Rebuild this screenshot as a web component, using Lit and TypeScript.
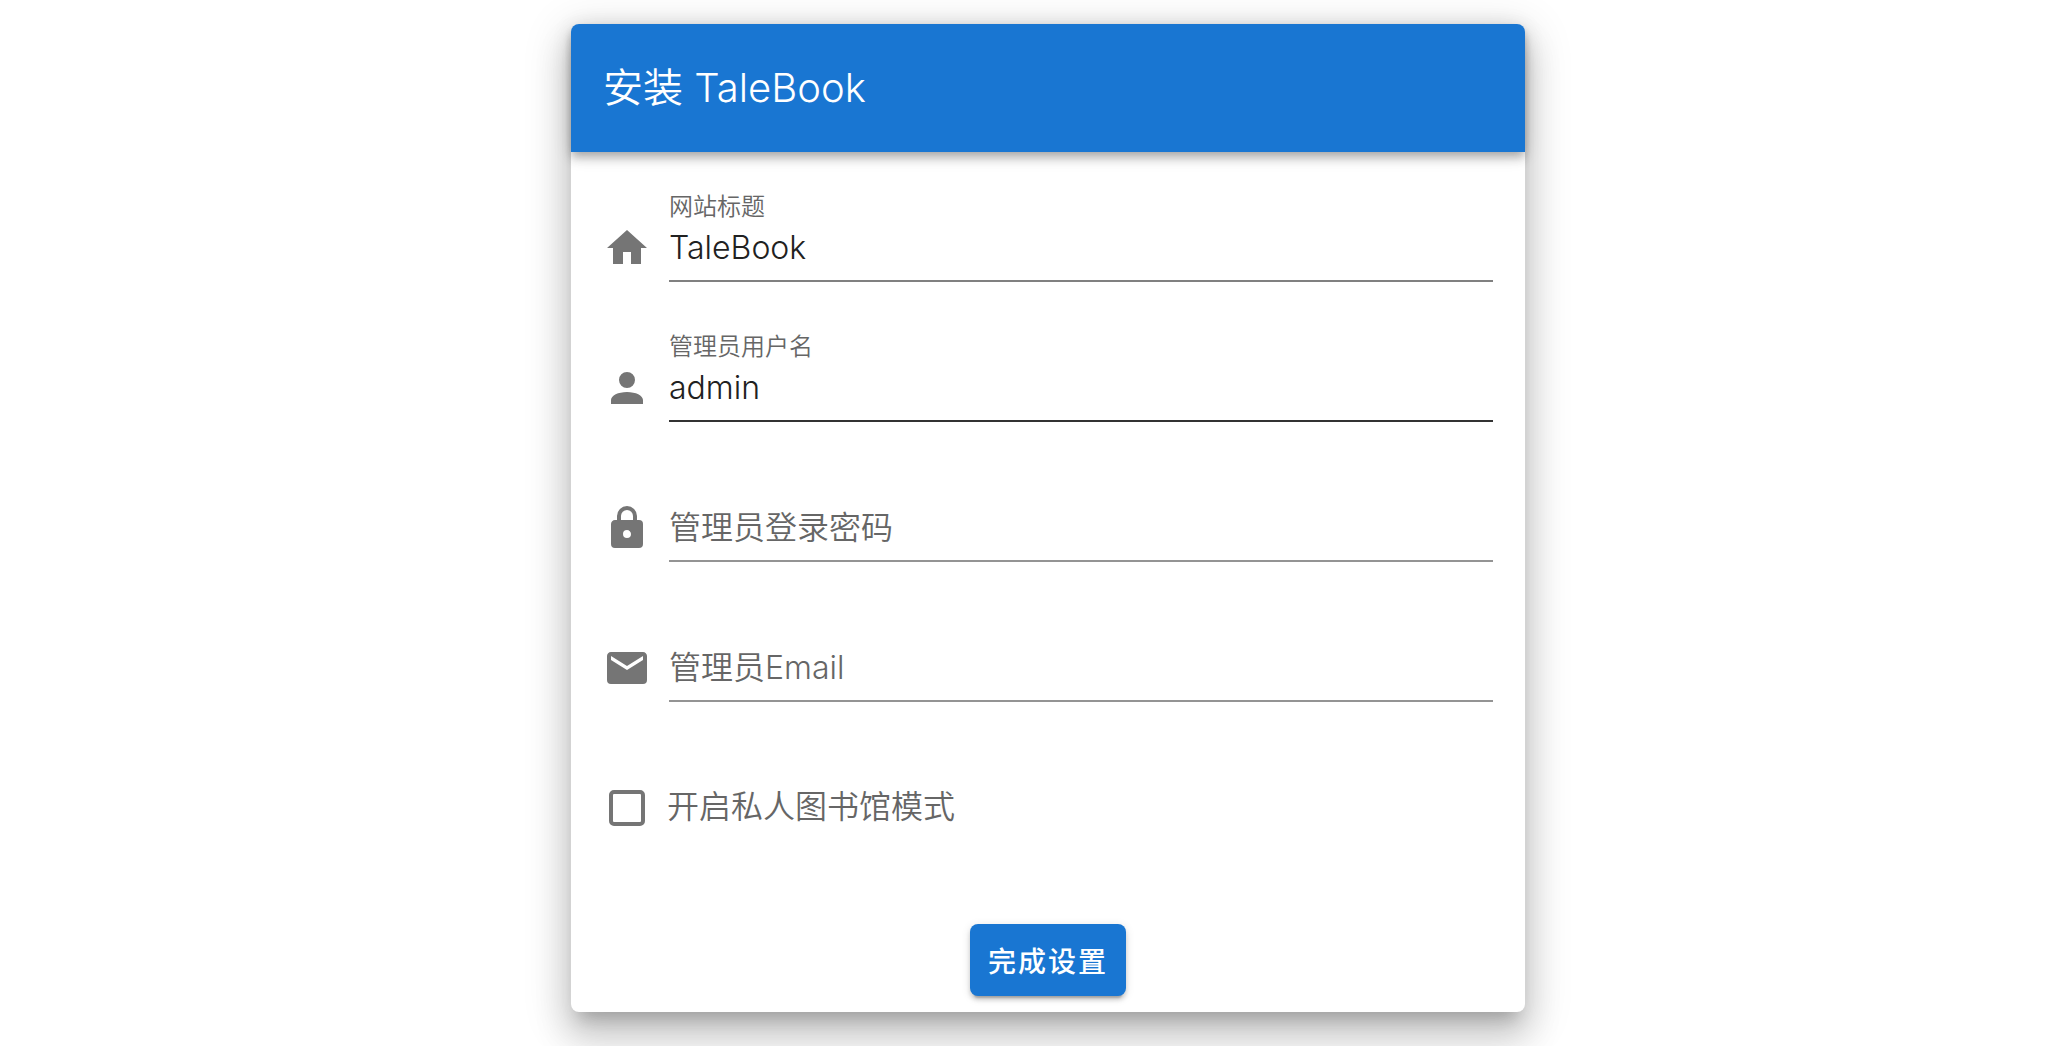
import { LitElement, html, css } from "lit";
import { customElement, property, state } from "lit/decorators.js";
import { classMap } from "lit/directives/class-map.js";

const ICONS = {
  home: "M10,20V14H14V20H19V12H22L12,3L2,12H5V20H10Z",
  account:
    "M12,4A4,4 0 0,1 16,8A4,4 0 0,1 12,12A4,4 0 0,1 8,8A4,4 0 0,1 12,4M12,14C16.42,14 20,15.79 20,18V20H4V18C4,15.79 7.58,14 12,14Z",
  lock: "M12,17A2,2 0 0,0 14,15C14,13.89 13.1,13 12,13A2,2 0 0,0 10,15A2,2 0 0,0 12,17M18,8A2,2 0 0,1 20,10V20A2,2 0 0,1 18,22H6A2,2 0 0,1 4,20V10C4,8.89 4.9,8 6,8H7V6A5,5 0 0,1 12,1A5,5 0 0,1 17,6V8H18M12,3A3,3 0 0,0 9,6V8H15V6A3,3 0 0,0 12,3Z",
  email:
    "M20,8L12,13L4,8V6L12,11L20,6M20,4H4C2.89,4 2,4.89 2,6V18A2,2 0 0,0 4,20H20A2,2 0 0,0 22,18V6C22,4.89 21.1,4 20,4Z",
};

type IconName = keyof typeof ICONS;

@customElement("text-field")
export class TextField extends LitElement {
  @property() label = "";
  @property() icon: IconName = "home";
  @property() type = "text";
  @property() value = "";
  @property({ type: Boolean }) active = false;
  @state() private focused = false;

  static styles = css`
    :host {
      display: block;
    }
    .field {
      display: grid;
      grid-template-columns: 48px minmax(0, 1fr);
      grid-template-rows: 32px 66px;
      column-gap: 18px;
      margin-bottom: 42px;
    }
    .icon {
      grid-area: 2 / 1;
      width: 48px;
      height: 48px;
      margin-top: 8px;
      fill: #757575;
    }
    .label {
      grid-area: 2 / 2;
      align-self: center;
      z-index: 1;
      padding-bottom: 2px;
      font-size: 32px;
      line-height: 40px;
      color: #666;
      pointer-events: none;
      white-space: nowrap;
    }
    .label.floating {
      grid-area: 1 / 2;
      align-self: end;
      padding: 0;
      font-size: 24px;
      line-height: 18px;
    }
    .input {
      grid-area: 2 / 2;
      width: 100%;
      box-sizing: border-box;
      margin: 0;
      padding: 0 0 2px;
      border: 0;
      border-bottom: 2px solid #949494;
      border-radius: 0;
      outline: none;
      background: transparent;
      color: #212121;
      font: inherit;
      font-size: 32px;
    }
    .input.filled {
      border-bottom-color: #808080;
    }
    .input.active,
    .input:hover,
    .input:focus {
      border-bottom-color: #333;
    }
  `;

  render() {
    const filled = this.value !== "";
    return html`
      <div class="field">
        <svg class="icon" viewBox="0 0 24 24" aria-hidden="true">
          <path d=${ICONS[this.icon]} />
        </svg>
        <label
          for="input"
          class=${classMap({ label: true, floating: filled || this.focused })}
          >${this.label}</label
        >
        <input
          id="input"
          class=${classMap({ input: true, filled, active: this.active })}
          type=${this.type}
          .value=${this.value}
          @input=${(e: Event) =>
            (this.value = (e.target as HTMLInputElement).value)}
          @focus=${() => (this.focused = true)}
          @blur=${() => (this.focused = false)}
        />
      </div>
    `;
  }
}

@customElement("app-root")
export class AppRoot extends LitElement {
  static styles = css`
    :host {
      display: block;
      min-height: 100vh;
      box-sizing: border-box;
      padding: 24px 0 34px 32px;
      overflow: hidden;
      background: #fff;
      font-family: Inter, "Noto Sans CJK SC", sans-serif;
      font-weight: 350;
    }
    .card {
      max-width: 954px;
      margin: 0 auto;
      border-radius: 8px;
      background: #fff;
      box-shadow:
        0 14px 16px -8px rgba(0, 0, 0, 0.2),
        0 24px 34px 4px rgba(0, 0, 0, 0.14),
        0 10px 44px 8px rgba(0, 0, 0, 0.12);
    }
    .toolbar {
      display: flex;
      align-items: center;
      height: 128px;
      padding: 0 32px;
      border-radius: 8px 8px 0 0;
      background: #1976d2;
      color: #fff;
      box-shadow:
        0 4px 8px -2px rgba(0, 0, 0, 0.2),
        0 8px 10px 0 rgba(0, 0, 0, 0.14),
        0 2px 20px 0 rgba(0, 0, 0, 0.12);
    }
    .title {
      margin: 0;
      font-size: 40px;
      line-height: 60px;
      font-weight: inherit;
    }
    .form {
      display: flex;
      flex-direction: column;
      padding: 32px 32px 16px;
    }
    .option {
      display: flex;
      align-items: center;
      gap: 16px;
      height: 48px;
      margin: 40px 0 92px;
      font-size: 32px;
      line-height: 40px;
      color: #666;
    }
    .option label {
      padding-bottom: 2px;
    }
    .checkbox {
      appearance: none;
      flex: none;
      width: 36px;
      height: 36px;
      margin: 6px;
      box-sizing: border-box;
      border: 4px solid #757575;
      border-radius: 5px;
      background: #fff;
    }
    .checkbox:checked {
      border-color: #1976d2;
      background: #1976d2;
    }
    .actions {
      display: flex;
      justify-content: center;
    }
    .submit {
      height: 72px;
      padding: 0 18px;
      border: 0;
      border-radius: 8px;
      background: #1976d2;
      color: #fff;
      font: inherit;
      font-size: 28px;
      font-weight: 500;
      letter-spacing: 2px;
      cursor: pointer;
      box-shadow:
        0 6px 2px -4px rgba(0, 0, 0, 0.2),
        0 4px 4px 0 rgba(0, 0, 0, 0.14),
        0 2px 10px 0 rgba(0, 0, 0, 0.12);
    }
  `;

  render() {
    return html`
      <main class="card">
        <header class="toolbar">
          <h1 class="title">安装 TaleBook</h1>
        </header>
        <form class="form" @submit=${(e: Event) => e.preventDefault()}>
          <text-field icon="home" label="网站标题" value="TaleBook"></text-field>
          <text-field
            icon="account"
            label="管理员用户名"
            value="admin"
            active
          ></text-field>
          <text-field
            icon="lock"
            type="password"
            label="管理员登录密码"
          ></text-field>
          <text-field
            icon="email"
            type="email"
            label="管理员Email"
          ></text-field>
          <div class="option">
            <input id="private" class="checkbox" type="checkbox" />
            <label for="private">开启私人图书馆模式</label>
          </div>
          <div class="actions">
            <button class="submit" type="submit">完成设置</button>
          </div>
        </form>
      </main>
    `;
  }
}
